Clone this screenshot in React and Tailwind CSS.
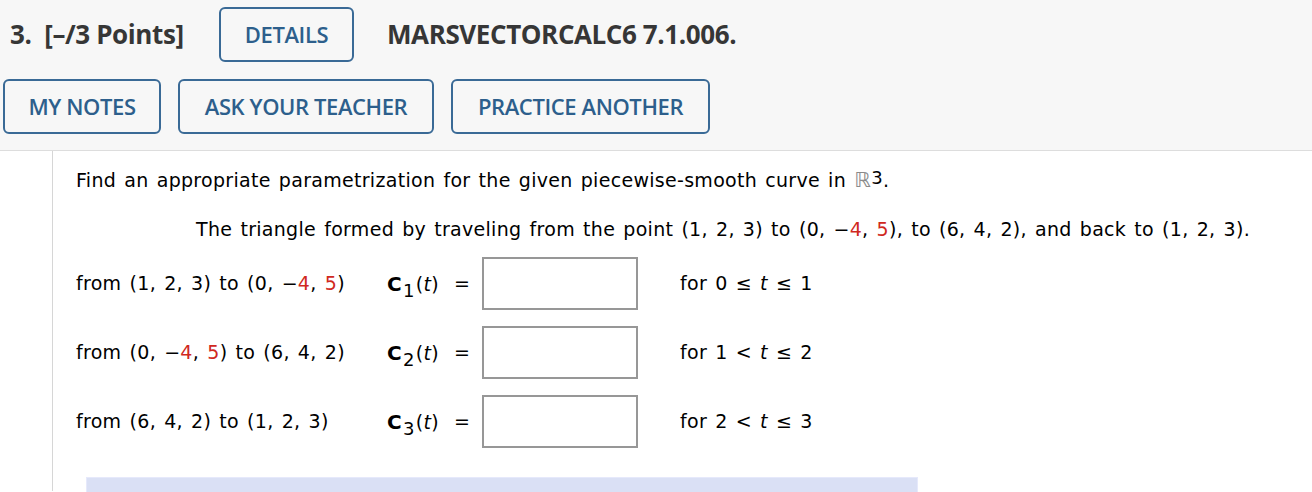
import React from "react";

const btn =
  "h-[55px] border-2 border-[#3a6a96] rounded-[6px] bg-transparent text-[#2d5f8c] text-[22px] font-semibold tracking-[-0.4px] flex items-center justify-center";

function Red({ children }) {
  return <span className="text-[#d0281e]">{children}</span>;
}

function C({ n }) {
  return (
    <span className="whitespace-nowrap">
      <span className="font-bold text-[20px]">C</span>
      <span className="inline-block text-[18px] relative top-[6px] mx-[1px]">{n}</span>
      (<i>t</i>)
    </span>
  );
}

function Row({ label, n, range }) {
  return (
    <div className="flex items-center h-[53px]">
      <div className="w-[311px] whitespace-nowrap">{label}</div>
      <div className="w-[67px]">
        <C n={n} />
      </div>
      <div className="w-[28px]">=</div>
      <div className="w-[156px] h-[53px] border-2 border-[#979797] bg-white shrink-0"></div>
      <div className="ml-[42px] whitespace-nowrap">{range}</div>
    </div>
  );
}

export default function App() {
  return (
    <div className="w-[1312px] h-[492px] overflow-hidden bg-white">
      <div
        className="bg-[#f7f7f7] h-[151px] border-b border-[#dddddd] pt-[7px]"
        style={{ fontFamily: '"Open Sans", sans-serif' }}
      >
        <div className="flex items-center h-[55px]">
          <div className="pl-[10px] w-[219px] text-[26px] font-bold text-[#363636] whitespace-pre tracking-[-0.4px]">
            3.  [–/3 Points]
          </div>
          <button className={btn + " w-[135px]"}>DETAILS</button>
          <div className="ml-[33px] text-[26px] font-bold text-[#363636] tracking-[-0.4px]">
            MARSVECTORCALC6 7.1.006.
          </div>
        </div>
        <div className="flex items-center gap-[17px] pl-[3px] mt-[17px]">
          <button className={btn + " w-[158px]"}>MY NOTES</button>
          <button className={btn + " w-[256px]"}>ASK YOUR TEACHER</button>
          <button className={btn + " w-[259px]"}>PRACTICE ANOTHER</button>
        </div>
      </div>
      <div className="flex h-[340px]">
        <div className="w-[53px] border-r border-[#d6d6d6] shrink-0"></div>
        <div
          className="pl-[23px] text-[19px] text-black flex-1 tracking-[0.3px] [word-spacing:1.8px]"
          style={{ fontFamily: '"DejaVu Sans", Verdana, sans-serif' }}
        >
          <div className="pt-[14px] h-[64px] whitespace-nowrap">
            Find an appropriate parametrization for the given piecewise-smooth
            curve in <span className="text-[#8a8a8a] text-[21px]">ℝ</span>
            <sup className="text-[18px] relative -top-[3px]">3</sup>.
          </div>
          <div className="pl-[120px] h-[42px] whitespace-nowrap">
            The triangle formed by traveling from the point (1, 2, 3) to (0, −
            <Red>4</Red>, <Red>5</Red>), to (6, 4, 2), and back to (1, 2, 3).
          </div>
          <div className="flex flex-col gap-[16px]">
            <Row
              n="1"
              label={
                <>
                  from (1, 2, 3) to (0, −<Red>4</Red>, <Red>5</Red>)
                </>
              }
              range={
                <>
                  for 0 ≤ <i>t</i> ≤ 1
                </>
              }
            />
            <Row
              n="2"
              label={
                <>
                  from (0, −<Red>4</Red>, <Red>5</Red>) to (6, 4, 2)
                </>
              }
              range={
                <>
                  for 1 &lt; <i>t</i> ≤ 2
                </>
              }
            />
            <Row
              n="3"
              label={<>from (6, 4, 2) to (1, 2, 3)</>}
              range={
                <>
                  for 2 &lt; <i>t</i> ≤ 3
                </>
              }
            />
          </div>
          <div className="mt-[29px] ml-[10px] w-[832px] h-[20px] bg-[#dae0f5] border border-[#e6e9fb]"></div>
        </div>
      </div>
    </div>
  );
}
